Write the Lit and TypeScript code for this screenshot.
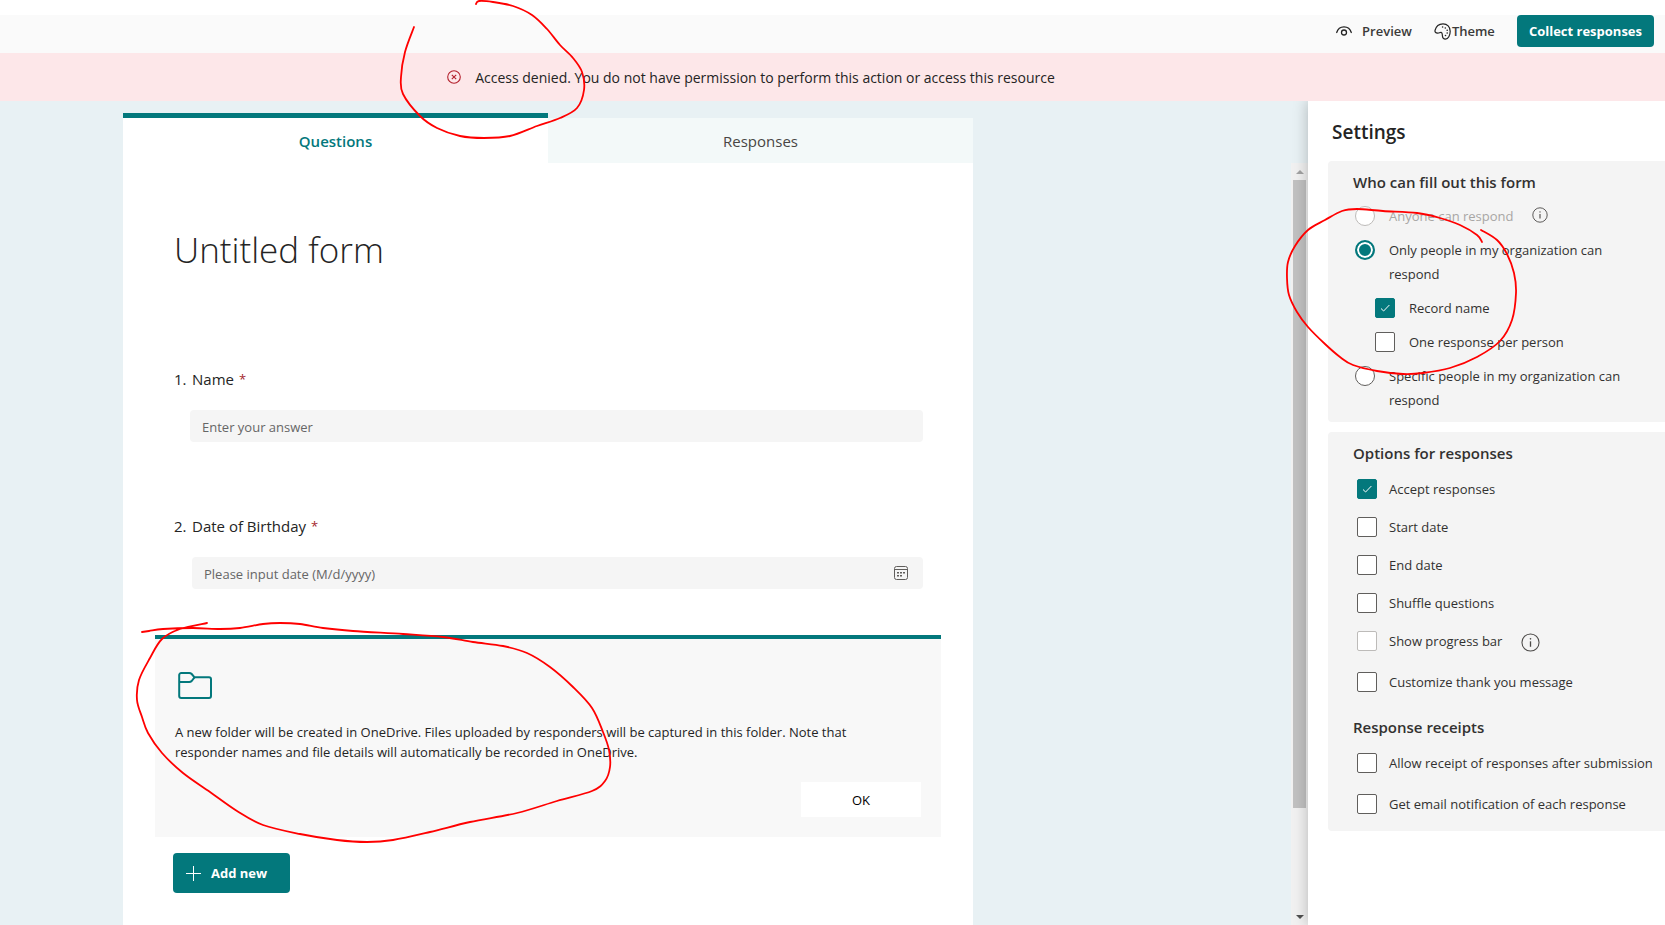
import { LitElement, html, svg, css } from "lit";
import { customElement, property } from "lit/decorators.js";
import { classMap } from "lit/directives/class-map.js";

type Point = [number, number];

const STROKES: Point[][] = [
  [[414, 27], [405, 52], [401, 77], [403, 94], [420, 116], [437, 128], [460, 136], [484, 138], [510, 136], [537, 126], [560, 118], [577, 108], [584, 90], [582, 72], [573, 58], [560, 45], [547, 29], [532, 15], [513, 6], [493, 2], [479, 1], [476, 4]],
  [[1482, 242], [1477, 235], [1460, 225], [1440, 218], [1417, 213], [1383, 211], [1357, 209], [1342, 211], [1325, 220], [1308, 230], [1295, 246], [1288, 262], [1287, 278], [1289, 295], [1297, 312], [1308, 327], [1325, 344], [1340, 357], [1353, 365], [1377, 371], [1403, 374], [1423, 373], [1450, 368], [1477, 357], [1500, 341], [1512, 320], [1516, 293], [1514, 273], [1507, 254], [1497, 240], [1481, 230]],
  [[142, 632], [149, 631], [163, 629], [193, 628], [220, 629], [240, 628], [263, 624], [280, 623], [300, 624], [323, 628], [353, 631], [403, 634], [443, 637], [473, 642], [503, 646], [527, 653], [550, 667], [573, 687], [592, 708], [603, 732], [609, 750], [610, 767], [605, 781], [592, 791], [557, 801], [517, 813], [470, 822], [430, 832], [393, 840], [367, 842], [337, 840], [300, 834], [263, 825], [237, 811], [210, 792], [183, 773], [162, 753], [148, 733], [142, 717], [137, 700], [139, 680], [150, 658], [162, 639], [180, 629], [207, 623]],
];

/** Joins the points of a pen stroke with a smooth curve. */
function smooth(p: Point[]): string {
  let d = `M${p[0][0]} ${p[0][1]}`;
  for (let i = 0; i < p.length - 1; i++) {
    const a = p[i - 1] ?? p[i];
    const b = p[i];
    const c = p[i + 1];
    const e = p[i + 2] ?? c;
    d += `C${b[0] + (c[0] - a[0]) / 6} ${b[1] + (c[1] - a[1]) / 6} ${c[0] - (e[0] - b[0]) / 6} ${c[1] - (e[1] - b[1]) / 6} ${c[0]} ${c[1]}`;
  }
  return d;
}

const infoIcon = (size: number) => html`
  <svg class="info" width=${size} height=${size} viewBox="0 0 16 16" fill="none" stroke="currentColor">
    <circle cx="8" cy="8" r="7.2" stroke-width="0.9" />
    <path d="M8 7v4.6" stroke-width="1.1" />
    <circle cx="8" cy="4.9" r="0.7" fill="currentColor" stroke="none" />
  </svg>
`;

const base = css`
  * {
    box-sizing: border-box;
  }
  button,
  input {
    font: inherit;
    color: inherit;
    margin: 0;
    border: 0;
    padding: 0;
    background: none;
  }
  svg {
    display: block;
    flex: none;
  }
`;

@customElement("choice-row")
class ChoiceRow extends LitElement {
  @property() type = "checkbox";
  @property() label = "";
  @property() group = "";
  @property({ type: Boolean }) checked = false;
  @property({ type: Boolean }) disabled = false;
  @property({ type: Boolean }) muted = false;
  @property({ type: Number }) info = 0;

  static styles = [
    base,
    css`
      :host {
        display: flex;
        align-items: flex-start;
        line-height: 24px;
      }
      .row {
        display: flex;
        align-items: flex-start;
      }
      .mark {
        display: grid;
        flex: none;
        margin: 2px 12px 2px 4px;
      }
      .mark.radio {
        margin: 2px 14px 2px 2px;
      }
      :host([nested]) .mark {
        margin: 2px 14px 2px 4px;
      }
      .mark > * {
        grid-area: 1 / 1;
        place-self: center;
      }
      .box {
        appearance: none;
        width: 20px;
        height: 20px;
        border: 1px solid #605e5c;
        border-radius: 2px;
        background: #fff;
      }
      .box:disabled {
        border-color: #bdbbb9;
      }
      .box.round {
        border-radius: 50%;
      }
      .box:checked {
        border-color: #03787c;
        background: #03787c;
      }
      .box.round:checked {
        border-width: 2px;
        box-shadow: inset 0 0 0 2px #fff;
      }
      .tick {
        pointer-events: none;
      }
      .muted {
        color: #a8a6a4;
      }
      .hint {
        display: grid;
        place-items: center;
        height: 22px;
        margin-left: 19px;
        color: #4c4a48;
      }
      .hint.large {
        height: 27px;
      }
    `,
  ];

  render() {
    const radio = this.type === "radio";
    return html`
      <label class="row">
        <span class=${classMap({ mark: true, radio })}>
          <input
            class=${classMap({ box: true, round: radio })}
            type=${this.type}
            name=${this.group}
            .checked=${this.checked}
            ?disabled=${this.disabled}
          />
          ${this.checked && !radio
            ? html`<svg class="tick" width="12" height="12" viewBox="0 0 12 12" fill="none" stroke="#fff">
                <path d="M2 6.5L4.6 9L10.4 3" />
              </svg>`
            : ""}
        </span>
        <span class=${classMap({ muted: this.muted })}>${this.label}</span>
      </label>
      ${this.info
        ? html`<button class=${classMap({ hint: true, large: this.info > 16 })} aria-label="More information">
            ${infoIcon(this.info)}
          </button>`
        : ""}
    `;
  }
}

@customElement("settings-panel")
class SettingsPanel extends LitElement {
  static styles = [
    base,
    css`
      :host {
        display: block;
        padding: 15px 0 0 20px;
        background: #fff;
        color: #323130;
      }
      .title {
        margin: 0 0 13px 4px;
        font-size: 19px;
        line-height: 32px;
        font-weight: 600;
        color: #242424;
      }
      .card {
        display: flex;
        flex-direction: column;
        padding: 9px 0 10px 25px;
        margin-bottom: 10px;
        border-radius: 4px 0 0 4px;
        background: #f4f4f4;
      }
      .heading {
        margin: 0;
        font-size: 15px;
        line-height: 24px;
        font-weight: 600;
      }
      .access {
        gap: 10px;
        padding-right: 20px;
      }
      .nested {
        display: flex;
        flex-direction: column;
        gap: 10px;
        padding-left: 18px;
      }
      .group {
        display: flex;
        flex-direction: column;
        gap: 14px;
        margin: 12px 0 21px;
      }
      .receipts {
        gap: 17px;
        margin-bottom: 5px;
        white-space: nowrap;
      }
    `,
  ];

  render() {
    return html`
      <h2 class="title">Settings</h2>
      <section class="card access">
        <h3 class="heading">Who can fill out this form</h3>
        <choice-row type="radio" group="access" label="Anyone can respond" disabled muted info="16"></choice-row>
        <choice-row type="radio" group="access" label="Only people in my organization can respond" checked></choice-row>
        <div class="nested">
          <choice-row nested label="Record name" checked></choice-row>
          <choice-row nested label="One response per person"></choice-row>
        </div>
        <choice-row type="radio" group="access" label="Specific people in my organization can respond"></choice-row>
      </section>
      <section class="card">
        <h3 class="heading">Options for responses</h3>
        <div class="group">
          <choice-row label="Accept responses" checked></choice-row>
          <choice-row label="Start date"></choice-row>
          <choice-row label="End date"></choice-row>
          <choice-row label="Shuffle questions"></choice-row>
          <choice-row label="Show progress bar" disabled info="19"></choice-row>
          <choice-row label="Customize thank you message"></choice-row>
        </div>
        <h3 class="heading">Response receipts</h3>
        <div class="group receipts">
          <choice-row label="Allow receipt of responses after submission"></choice-row>
          <choice-row label="Get email notification of each response"></choice-row>
        </div>
      </section>
    `;
  }
}

@customElement("form-editor")
class FormEditor extends LitElement {
  static styles = [
    base,
    css`
      :host {
        display: flex;
        flex-direction: column;
        color: #242424;
      }
      .tabs {
        display: grid;
        grid-template-columns: 1fr 1fr;
        height: 50px;
      }
      .tab {
        margin-top: 5px;
        font-size: 15px;
        line-height: 20px;
        color: #484644;
        background: #f3f9f9;
      }
      .tab.active {
        margin-top: 0;
        border-top: 5px solid #03787c;
        background: #fff;
        color: #03787c;
        font-weight: 600;
      }
      .sheet {
        flex: 1;
        padding: 61px 32px 30px;
        background: #fff;
      }
      .title {
        margin: 0 0 93px 19px;
        font-size: 35px;
        line-height: 52px;
        font-weight: 300;
      }
      .question {
        margin: 0 18px 74px 19px;
      }
      .question.last {
        margin-bottom: 46px;
      }
      .prompt {
        display: flex;
        margin-bottom: 21px;
        font-size: 15px;
        line-height: 20px;
      }
      .number {
        width: 18px;
      }
      .required {
        margin-left: 5px;
        font-size: 13px;
        color: #a4262c;
      }
      .field {
        display: flex;
        align-items: center;
        height: 32px;
        margin-left: 16px;
        padding: 0 15px 0 12px;
        border-radius: 4px;
        background: #f5f5f5;
      }
      .last .field {
        margin-left: 18px;
      }
      .entry {
        flex: 1;
        min-width: 0;
        padding-top: 2px;
        outline: 0;
      }
      .entry::placeholder {
        color: #666;
        opacity: 1;
      }
      .notice {
        display: flex;
        flex-direction: column;
        padding: 33px 20px 20px;
        border-top: 4px solid #03787c;
        background: #f8f8f8;
      }
      .folder {
        margin-left: 3px;
      }
      .text {
        margin: 23px 0 20px;
        line-height: 20px;
        max-width: 710px;
      }
      .ok {
        align-self: flex-end;
        width: 120px;
        height: 35px;
        background: #fff;
        color: #000;
      }
      .add {
        display: flex;
        align-items: center;
        gap: 10px;
        height: 40px;
        margin: 16px 0 0 18px;
        padding: 0 23px 0 13px;
        border-radius: 4px;
        background: #03787c;
        color: #fff;
        font-weight: 700;
      }
    `,
  ];

  render() {
    return html`
      <div class="tabs" role="tablist">
        <button class="tab active" role="tab" aria-selected="true">Questions</button>
        <button class="tab" role="tab" aria-selected="false">Responses</button>
      </div>
      <div class="sheet">
        <h1 class="title">Untitled form</h1>
        <div class="question">
          <label class="prompt" for="q1">
            <span class="number">1.</span><span>Name</span><span class="required">*</span>
          </label>
          <div class="field"><input class="entry" id="q1" type="text" placeholder="Enter your answer" /></div>
        </div>
        <div class="question last">
          <label class="prompt" for="q2">
            <span class="number">2.</span><span>Date of Birthday</span><span class="required">*</span>
          </label>
          <div class="field">
            <input class="entry" id="q2" type="text" placeholder="Please input date (M/d/yyyy)" />
            <button aria-label="Open calendar">
              <svg width="14" height="14" viewBox="0 0 14 14" fill="none" stroke="#605e5c">
                <rect x="0.5" y="0.5" width="13" height="13" rx="2" />
                <path d="M0.5 3.5h13" />
                <path d="M3 6.8h2M6 6.8h2M9 6.8h2M3 9.8h2M6 9.8h2" stroke-width="1.6" />
              </svg>
            </button>
          </div>
        </div>
        <section class="notice">
          <svg class="folder" width="34" height="27" viewBox="0 0 34 27" fill="none" stroke="#03787c" stroke-width="2" stroke-linejoin="round">
            <path d="M3.200 1h8c1.200 0 1.800.3 2.500 1L16.500 5.300H31a2 2 0 0 1 2 2V24a2 2 0 0 1-2 2H3.200a2 2 0 0 1-2-2V3a2 2 0 0 1 2-2z" />
            <path d="M1.200 10h10c1.200 0 1.800-.3 2.500-1l2.800-3.700" />
          </svg>
          <p class="text">
            A new folder will be created in OneDrive. Files uploaded by responders will be captured in this folder.
            Note that responder names and file details will automatically be recorded in OneDrive.
          </p>
          <button class="ok">OK</button>
        </section>
        <button class="add">
          <svg width="15" height="15" viewBox="0 0 15 15" stroke="#fff"><path d="M7.500 0v15M0 7.500h15" /></svg>
          Add new
        </button>
      </div>
    `;
  }
}

@customElement("app-root")
class AppRoot extends LitElement {
  static styles = [
    base,
    css`
      :host {
        position: relative;
        display: flex;
        flex-direction: column;
        height: 100vh;
        overflow: hidden;
        background: #fff;
        font-family: "Open Sans", "Noto Sans", sans-serif;
        font-size: 13px;
        color: #242424;
      }
      .toolbar {
        display: flex;
        justify-content: flex-end;
        align-items: flex-start;
        height: 38px;
        margin-top: 15px;
        padding-right: 11px;
        background: #fafafa;
        color: #3b3a39;
        font-weight: 600;
      }
      .command {
        display: flex;
        align-items: center;
        gap: 10px;
        height: 32px;
        margin-right: 22px;
      }
      .command.tight {
        gap: 1px;
      }
      .collect {
        height: 32px;
        padding: 0 12px;
        border-radius: 4px;
        background: #03787c;
        color: #fff;
        font-weight: 700;
      }
      .banner {
        display: flex;
        align-items: center;
        justify-content: center;
        gap: 14px;
        height: 48px;
        padding-right: 163px;
        background: #fde7e9;
        font-size: 14px;
      }
      .work {
        flex: 1;
        display: grid;
        grid-template-columns: minmax(0, 1fr) 357px;
        min-height: 0;
        background: #e8f1f4;
      }
      .canvas {
        display: flex;
        justify-content: space-between;
        min-height: 0;
      }
      .editor {
        flex: 0 1 850px;
        margin: 12px 0 0 123px;
      }
      .scrollbar {
        display: flex;
        flex-direction: column;
        align-items: center;
        width: 17px;
        margin-top: 62px;
        background: #f1f1f1;
      }
      .arrow {
        display: grid;
        place-items: center;
        height: 17px;
        width: 17px;
      }
      .track {
        flex: 1;
        width: 13px;
      }
      .thumb {
        height: calc(100% - 100px);
        background: #c1c1c1;
      }
      .panel {
        box-shadow: 0 0 14px rgba(0, 0, 0, 0.25);
        clip-path: inset(0 0 0 -20px);
      }
      .ink {
        position: absolute;
        inset: 0;
        pointer-events: none;
      }
    `,
  ];

  render() {
    return html`
      <header class="toolbar">
        <button class="command">
          <svg width="16" height="12" viewBox="0 0 16 12" fill="none" stroke="#242424" stroke-width="1.300">
            <path d="M0.700 7.500C1.800 3.700 4.600 1.800 8 1.800S14.200 3.700 15.300 7.500" stroke-linecap="round" />
            <circle cx="8" cy="7.500" r="2.500" />
          </svg>
          Preview
        </button>
        <button class="command tight">
          <svg width="17" height="17" viewBox="0 0 17 17" fill="none" stroke="#242424" stroke-width="1.200" stroke-linejoin="round">
            <path d="M1 7.500C2 3.300 5 .8 9 .8c4.200 0 7.200 3 7.200 7.400 0 4.200-2 8-4.800 8-2.200 0-2.800-1.400-3-3.200-.2-1.700.2-3.200-1.300-3.600-1.200-.3-2 .9-3.500.7C1.600 9.900.7 9 1 7.500z" />
            <g fill="#242424" stroke="none">
              <circle cx="8.600" cy="4" r="0.800" /><circle cx="11.300" cy="5" r="0.800" /><circle cx="13.200" cy="7.200" r="0.800" />
              <circle cx="13.200" cy="10" r="0.800" /><circle cx="11.500" cy="12.500" r="0.800" />
            </g>
          </svg>
          Theme
        </button>
        <button class="collect">Collect responses</button>
      </header>
      <div class="banner" role="alert">
        <svg width="14" height="14" viewBox="0 0 14 14" fill="none" stroke="#b3202c" stroke-width="1.100">
          <circle cx="7" cy="7" r="6.300" />
          <path d="M4.800 4.800l4.400 4.400M9.200 4.800l-4.400 4.400" />
        </svg>
        <span>Access denied. You do not have permission to perform this action or access this resource</span>
      </div>
      <div class="work">
        <main class="canvas">
          <form-editor class="editor"></form-editor>
          <div class="scrollbar" aria-hidden="true">
            <div class="arrow"><svg width="8" height="4" viewBox="0 0 8 4"><path d="M0 4L4 0L8 4z" fill="#a3a3a3" /></svg></div>
            <div class="track"><div class="thumb"></div></div>
            <div class="arrow"><svg width="8" height="4" viewBox="0 0 8 4"><path d="M0 0L4 4L8 0z" fill="#505050" /></svg></div>
          </div>
        </main>
        <settings-panel class="panel"></settings-panel>
      </div>
      <svg class="ink" width="1665" height="925" viewBox="0 0 1665 925" fill="none" stroke="#f00" stroke-width="1.800" stroke-linecap="round" aria-hidden="true">
        ${STROKES.map((s) => svg`<path d=${smooth(s)} />`)}
      </svg>
    `;
  }
}
